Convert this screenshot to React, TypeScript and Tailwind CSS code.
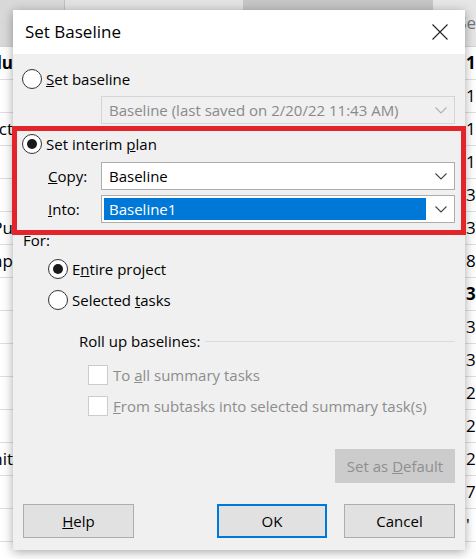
const FONT = "font-['Open_Sans','Noto_Sans',sans-serif]";

function Radio({ checked }: { checked?: boolean }) {
  return (
    <span className="flex h-[20px] w-[20px] shrink-0 items-center justify-center rounded-full border border-[#333333] bg-white">
      {checked && <span className="h-[10px] w-[10px] rounded-full bg-[#1a1a1a]" />}
    </span>
  );
}

function Chevron({ color = "#444444" }: { color?: string }) {
  return (
    <svg width="12" height="7" viewBox="0 0 12 7">
      <path d="M0.5 0.5 L6 6 L11.5 0.5" fill="none" stroke={color} strokeWidth="1.1" />
    </svg>
  );
}

function Checkbox() {
  return <span className="h-[20px] w-[20px] shrink-0 border border-[#cccccc] bg-white" />;
}

const leftBits: Record<number, string> = { 0: "Valu", 2: "Product", 5: "Pu", 6: "Imp", 12: "Unit" };
const rightBits = ["1", "1,", "1,", "1,", "3,", "3", "8,", "3", "3", "3", "2", "2", "2", "7,", "'"];

function Background() {
  return (
    <div className="flex h-full w-full flex-col bg-white">
      {/* column header strip */}
      <div className="flex h-[47px] shrink-0 border-b border-[#d4d4d4]">
        <div className="w-[65px] bg-[#d9d9d9]" />
        <div className="w-[183px] border-l border-[#c0c0c0] bg-[#e3e3e3]" />
        <div className="w-[194px] bg-[#c6c6c6]" />
        <div className="flex flex-1 items-center bg-[#e6e6e6] pl-[24px] text-[17px] text-[#777]">Se</div>
      </div>
      {rightBits.map((r, i) => (
        <div key={i} className="flex h-[33px] shrink-0 items-center justify-between border-b border-[#dedede]">
          <div className="flex w-[13px] justify-end overflow-hidden whitespace-nowrap text-[17px] text-black">
            <span className={i === 0 ? "font-bold" : ""}>{leftBits[i] ?? ""}</span>
          </div>
          <div className={`w-[10px] overflow-visible whitespace-nowrap text-[17px] text-black ${i === 0 || i === 7 ? "font-bold" : ""}`}>
            {r}
          </div>
        </div>
      ))}
    </div>
  );
}

export default function App() {
  return (
    <div className={`relative h-[559px] w-[476px] overflow-hidden ${FONT}`}>
      <Background />

      {/* dialog window */}
      <div className="absolute left-[13px] top-[10px] flex h-[540px] w-[452px] flex-col bg-[#f0f0f0] text-[15px] text-black shadow-[0_2px_10px_rgba(0,0,0,0.35)]">
        {/* title bar */}
        <div className="flex h-[44px] shrink-0 items-center justify-between bg-white pl-[12px] pr-[17px]">
          <span className="text-[17px]">Set Baseline</span>
          <svg width="16" height="16" viewBox="0 0 16 16">
            <path d="M0.5 0.5 L15.5 15.5 M15.5 0.5 L0.5 15.5" stroke="#222" strokeWidth="1.1" />
          </svg>
        </div>

        {/* Set baseline */}
        <div className="mt-[11px] flex h-[28px] items-center gap-[4px] pl-[9px]">
          <Radio />
          <span>
            <u>S</u>et baseline
          </span>
        </div>
        <div className="ml-[88px] mt-[3px] flex h-[28px] w-[354px] items-center justify-between border border-[#d5d5d5] bg-[#f0f0f0] pl-[7px] pr-[7px] text-[#8a8a8a]">
          <span className="whitespace-nowrap">Baseline (last saved on 2/20/22 11:43 AM)</span>
          <Chevron color="#b0b0b0" />
        </div>

        {/* Set interim plan */}
        <div className="mt-[6px] flex h-[28px] items-center gap-[4px] pl-[9px]">
          <Radio checked />
          <span>
            Set interim <u>p</u>lan
          </span>
        </div>
        <div className="mt-[4px] flex h-[28px] items-center">
          <span className="w-[88px] pl-[35px]">
            <u>C</u>opy:
          </span>
          <div className="flex h-full w-[354px] items-center justify-between border border-[#adadad] bg-white pl-[7px] pr-[7px]">
            <span>Baseline</span>
            <Chevron />
          </div>
        </div>
        <div className="mt-[5px] flex h-[28px] items-center">
          <span className="w-[88px] pl-[35px]">
            <u>I</u>nto:
          </span>
          <div className="flex h-full w-[354px] items-center justify-between border border-[#adadad] bg-white p-[2px] pr-[7px]">
            <span className="flex h-full w-[322px] items-center bg-[#0078d7] pl-[5px] text-white">Baseline1</span>
            <Chevron />
          </div>
        </div>

        {/* For */}
        <div className="mt-[7px] flex h-[20px] items-center pl-[10px]">For:</div>
        <div className="mt-[9px] flex h-[20px] items-center gap-[4px] pl-[35px]">
          <Radio checked />
          <span>
            E<u>n</u>tire project
          </span>
        </div>
        <div className="mt-[11px] flex h-[20px] items-center gap-[4px] pl-[35px]">
          <Radio />
          <span>
            Selected <u>t</u>asks
          </span>
        </div>

        {/* Roll up */}
        <div className="mt-[21px] flex h-[20px] items-center gap-[5px] pl-[66px] pr-[10px]">
          <span className="whitespace-nowrap">Roll up baselines:</span>
          <span className="h-px flex-1 bg-[#dcdcdc]" />
        </div>
        <div className="mt-[14px] flex h-[20px] items-center gap-[5px] pl-[75px] text-[#8d8d8d]">
          <Checkbox />
          <span>
            To <u>a</u>ll summary tasks
          </span>
        </div>
        <div className="mt-[11px] flex h-[20px] items-center gap-[5px] pl-[75px] text-[#8d8d8d]">
          <Checkbox />
          <span className="whitespace-nowrap">
            <u>F</u>rom subtasks into selected summary task(s)
          </span>
        </div>

        {/* Set as Default */}
        <div className="mt-[33px] flex justify-end pr-[10px]">
          <div className="flex h-[34px] w-[120px] items-center justify-center bg-[#cccccc] text-[#8f8f8f]">
            <span>
              Set as <u>D</u>efault
            </span>
          </div>
        </div>

        {/* Buttons */}
        <div className="mt-[21px] flex h-[34px] items-center pl-[10px] pr-[10px]">
          <div className="flex h-full w-[111px] items-center justify-center border border-[#adadad] bg-[#e1e1e1]">
            <span>
              <u>H</u>elp
            </span>
          </div>
          <div className="ml-[83px] flex h-full w-[110px] items-center justify-center border-2 border-[#0078d7] bg-[#e1e1e1]">
            OK
          </div>
          <div className="ml-[17px] flex h-full w-[111px] items-center justify-center border border-[#adadad] bg-[#e1e1e1]">
            Cancel
          </div>
        </div>
      </div>

      {/* red annotation box */}
      <div className="absolute left-[12px] top-[126px] h-[109px] w-[454px] border-[5px] border-[#e3242b]" />
    </div>
  );
}
